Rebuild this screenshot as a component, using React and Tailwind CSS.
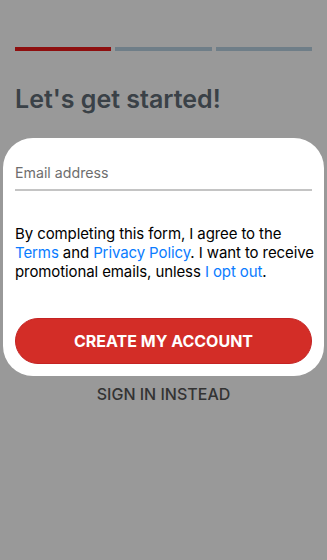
export default function App() {
  return (
    <div
      className="h-[560px] w-full bg-[#999999] px-[15px] pt-[47px]"
      style={{ fontFamily: 'Inter, "Noto Sans", sans-serif' }}
    >
      <div className="flex gap-[4px]">
        <div className="h-[4px] flex-1 bg-[#8e0f0f]" />
        <div className="h-[4px] flex-1 bg-[#6f7e88]" />
        <div className="h-[4px] flex-1 bg-[#6f7e88]" />
      </div>
      <h1 className="mt-[33px] text-[25px] font-semibold leading-[30px] text-[#3a4147]">
        Let's get started!
      </h1>
      <div className="-mx-[12px] mt-[24px] rounded-[30px] bg-white px-[12px] pb-[12px] pt-[25px]">
        <div className="border-b-2 border-[#c4c4c4] pb-[6px] text-[14.2px] leading-[20px] text-[#6e6e6e]">
          Email address
        </div>
        <p className="-mr-[6px] mt-[33px] whitespace-nowrap text-[15px] leading-[19px] tracking-[-0.1px] text-black">
          By completing this form, I agree to the
          <br />
          <span className="text-[#0a7cff]">Terms</span> and{" "}
          <span className="text-[#0a7cff]">Privacy Policy</span>. I want to receive
          <br />
          promotional emails, unless <span className="text-[#0a7cff]">I opt out</span>.
        </p>
        <button className="mt-[37px] flex h-[46px] w-full items-center justify-center rounded-full border border-[#c42323] bg-[#d32d27] text-[16px] font-bold text-white">
          CREATE MY ACCOUNT
        </button>
      </div>
      <div className="mt-[8px] text-center text-[16px] font-medium leading-[20px] text-[#333333]">
        SIGN IN INSTEAD
      </div>
    </div>
  );
}
